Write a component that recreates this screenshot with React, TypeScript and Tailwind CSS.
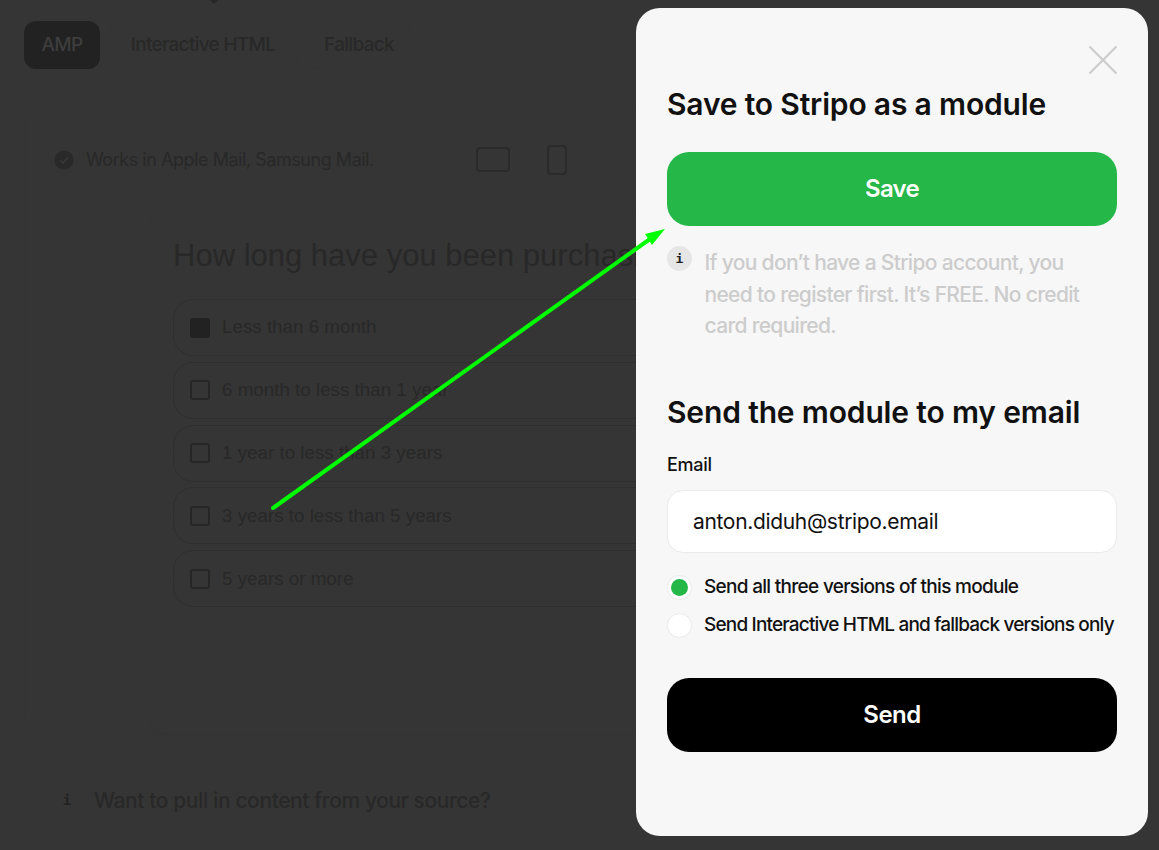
import React from "react";

const options = ["Less than 6 month", "6 month to less than 1 year", "1 year to less than 3 years", "3 years to less than 5 years", "5 years or more"];

function Option({ label, checked }: { label: string; checked?: boolean }) {
  return (
    <div className="h-[57px] w-[700px] rounded-[20px] border border-[#2f2f2f] flex items-center pl-[16px] gap-[12px]">
      <span className={checked ? "w-[20px] h-[20px] rounded-[3px] bg-[#222222]" : "w-[20px] h-[20px] rounded-[3px] border-2 border-[#262626]"} />
      <span className="text-[18.8px] text-[#282828] font-['Liberation_Sans',sans-serif]">{label}</span>
    </div>
  );
}

export default function App() {
  return (
    <div className="relative w-[1159px] h-[850px] overflow-hidden bg-[#353535] font-['Inter',sans-serif]">
      <svg width="8" height="4" viewBox="0 0 8 4" className="absolute left-[210px] top-0">
        <path d="M0 0H8L4.5 3.5H3.5Z" fill="#262626" />
      </svg>
      {/* Dimmed page */}
      <div className="pl-[24px] pt-[21px]">
        <div className="flex gap-[8px] text-[19px] font-medium text-[#282828] tracking-[-0.7px]">
          <div className="w-[76px] h-[48px] rounded-[12px] bg-[#222222] flex items-center justify-center text-[#3d3d3d]">AMP</div>
          <div className="w-[190px] h-[48px] rounded-[12px] border border-[#343434] flex items-center justify-center">Interactive HTML</div>
          <div className="w-[106px] h-[48px] rounded-[12px] border border-[#343434] flex items-center justify-center">Fallback</div>
        </div>
        <div className="mt-[39px] w-[800px] h-[627px] rounded-[20px] border border-[#343434] flex flex-col">
          <div className="h-[101px] flex items-center pl-[29px]">
            <svg width="20" height="20" viewBox="0 0 20 20" className="shrink-0">
              <circle cx="10" cy="10" r="9.5" fill="#292929" />
              <path d="M6 10.2l2.8 2.8L14 7.5" fill="none" stroke="#3a3a3a" strokeWidth="1.4" />
            </svg>
            <span className="ml-[12px] w-[390px] text-[18px] text-[#282828] tracking-[-0.46px]">Works in Apple Mail, Samsung Mail.</span>
            <span className="w-[34px] h-[25px] rounded-[4px] border-2 border-[#2a2a2a]" />
            <span className="ml-[37px] w-[20px] h-[30px] rounded-[4px] border-2 border-[#2a2a2a]" />
          </div>
          <div className="ml-[122px] flex-1 rounded-[20px] border border-[#343434] pl-[25px] pt-[27px]">
            <div className="text-[31px] leading-[36px] text-[#282828] font-['Liberation_Sans',sans-serif] whitespace-nowrap">How long have you been purchasing</div>
            <div className="mt-[25px] flex flex-col gap-[5.8px]">
              {options.map((o, i) => (
                <Option key={o} label={o} checked={i === 0} />
              ))}
            </div>
          </div>
        </div>
        <div className="mt-[50px] ml-[31px] flex items-center gap-[15px]">
          <span className="w-[24px] text-center text-[14px] font-bold text-[#222222] font-['DejaVu_Sans_Mono',monospace]">i</span>
          <span className="text-[21px] font-medium text-[#282828] tracking-[-0.4px]">Want to pull in content from your source?</span>
        </div>
      </div>

      {/* Modal */}
      <div className="absolute left-[636px] top-[8px] w-[512px] h-[828px] rounded-[24px] bg-[#f7f7f7] px-[31px] pt-[76px]">
        <svg width="30" height="30" viewBox="0 0 30 30" className="absolute left-[452px] top-[37px]">
          <path d="M1.5 1.5L28.5 28.5M28.5 1.5L1.5 28.5" stroke="#cccccc" strokeWidth="2.2" fill="none" />
        </svg>
        <h2 className="text-[30px] leading-[40px] font-semibold text-[#111111] tracking-[-0.17px]">Save to Stripo as a module</h2>
        <button className="mt-[28px] w-[450px] h-[74px] rounded-[22px] bg-[#25b848] text-white text-[24px] font-semibold tracking-[-0.7px]">Save</button>
        <div className="mt-[20px] flex gap-[12px]">
          <span className="shrink-0 w-[25px] h-[25px] rounded-full bg-[#e6e6e6] flex items-center justify-center text-[13px] font-bold text-[#222222] font-['DejaVu_Sans_Mono',monospace]">i</span>
          <p className="w-[385px] text-[21px] leading-[31.5px] text-[#cccccc] font-medium tracking-[-0.68px] pt-[1px] pl-[0.5px]">
            If you don’t have a Stripo account, you need to register first. It’s FREE. No credit card required.
          </p>
        </div>
        <h2 className="mt-[50px] text-[30px] leading-[40px] font-semibold text-[#111111] tracking-[-0.15px]">Send the module to my email</h2>
        <div className="mt-[20px] text-[18px] leading-[26px] font-medium text-[#111111] tracking-[-0.3px]">Email</div>
        <div className="mt-[12px] w-[450px] h-[63px] rounded-[16px] bg-white border border-[#eaeaea] flex items-center pl-[25px] pt-[2px] text-[21px] text-[#111111] tracking-[-0.33px]">anton.diduh@stripo.email</div>
        <div className="mt-[22px] flex flex-col gap-[13px]">
          <div className="flex items-center gap-[12px] h-[25px]">
            <span className="shrink-0 w-[25px] h-[25px] rounded-full bg-white border border-[#eaeaea] flex items-center justify-center">
              <span className="w-[17px] h-[17px] rounded-full bg-[#25b848]" />
            </span>
            <span className="text-[19px] font-medium text-[#111111] tracking-[-0.7px]">Send all three versions of this module</span>
          </div>
          <div className="flex items-center gap-[12px] h-[25px]">
            <span className="shrink-0 w-[25px] h-[25px] rounded-full bg-white border border-[#eaeaea]" />
            <span className="text-[19px] font-medium text-[#111111] tracking-[-0.82px] whitespace-nowrap">Send Interactive HTML and fallback versions only</span>
          </div>
        </div>
        <button className="mt-[40px] w-[450px] h-[74px] rounded-[22px] bg-black text-white text-[24px] font-semibold tracking-[-0.5px]">Send</button>
      </div>

      {/* Annotation arrow */}
      <svg width="1159" height="850" className="absolute left-0 top-0 pointer-events-none">
        <line x1="273" y1="508" x2="650" y2="239" stroke="#00ff00" strokeWidth="4" strokeLinecap="round" />
        <polygon points="665,229 645,234 649,240 652,245" fill="#00ff00" />
      </svg>
    </div>
  );
}
